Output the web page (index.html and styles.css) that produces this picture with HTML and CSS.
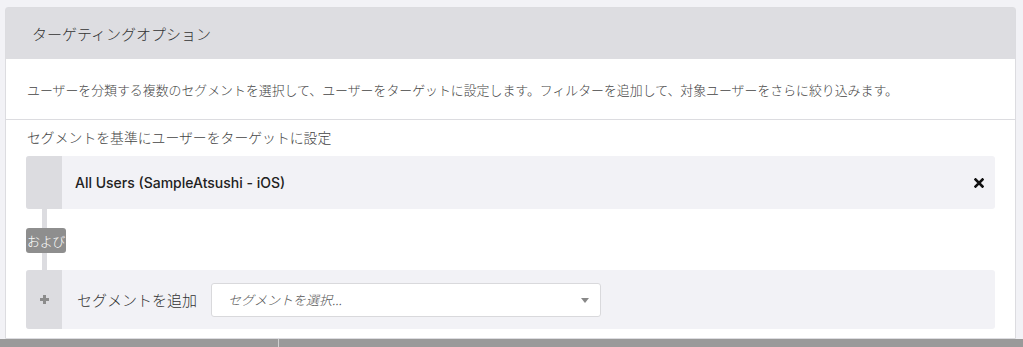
FILE: index.html
```html
<!DOCTYPE html>
<html lang="ja">
<head>
<meta charset="utf-8">
<title>ターゲティングオプション</title>
<link rel="stylesheet" href="styles.css">
</head>
<body>
<div class="card">
  <div class="card-header">ターゲティングオプション</div>
  <div class="card-desc">ユーザーを分類する複数のセグメントを選択して、ユーザーをターゲットに設定します。フィルターを追加して、対象ユーザーをさらに絞り込みます。</div>
  <div class="card-section">
    <div class="section-label">セグメントを基準にユーザーをターゲットに設定</div>
    <div class="seg-row">
      <div class="seg-bar"></div>
      <div class="seg-name">All Users (SampleAtsushi - iOS)</div>
      <button class="seg-remove" aria-label="remove">
        <svg width="10" height="10" viewBox="0 0 10 10"><path d="M1.5 1.5 L8.5 8.5 M8.5 1.5 L1.5 8.5" stroke="#111" stroke-width="2.6" stroke-linecap="square" fill="none"/></svg>
      </button>
    </div>
    <div class="connector">
      <div class="conn-line conn-top"></div>
      <div class="conn-badge">および</div>
      <div class="conn-line conn-bottom"></div>
    </div>
    <div class="seg-row add-row">
      <div class="seg-bar plus-bar">
        <svg width="9" height="9" viewBox="0 0 9 9"><path d="M4.5 0 V9 M0 4.5 H9" stroke="#8c8c8c" stroke-width="3" fill="none"/></svg>
      </div>
      <div class="add-label">セグメントを追加</div>
      <div class="select">
        <span class="select-placeholder">セグメントを選択...</span>
        <span class="select-arrow"></span>
      </div>
    </div>
  </div>
</div>
<div class="footer-band">
  <div class="band-left"></div>
  <div class="band-right"></div>
</div>
</body>
</html>
```

FILE: styles.css
```css
html, body {
  margin: 0;
  padding: 0;
  overflow: hidden;
}
body {
  background: #f2f2f6;
  font-family: "Noto Sans CJK JP", "Noto Sans", sans-serif;
  font-weight: 300;
  color: #333;
}
.card {
  margin: 7px 0 0 5px;
  width: 1011px;
  box-sizing: border-box;
  background: #fff;
  border: 1px solid #dcdce0;
  border-radius: 3px 3px 0 0;
}
.card-header {
  height: 51px;
  background: #dddde1;
  display: flex;
  align-items: center;
  padding-left: 26px;
  font-size: 15px;
  color: #333;
}
.card-desc {
  height: 60px;
  display: flex;
  align-items: center;
  padding-left: 21px;
  font-size: 12.9px;
  color: #444;
  border-bottom: 1px solid #dcdce0;
  white-space: nowrap;
}
.card-section {
  padding: 7px 20px 9px 20px;
}
.section-label {
  height: 20px;
  line-height: 20px;
  font-size: 13.85px;
  color: #444;
  margin-bottom: 9px;
  padding-left: 1px;
}
.seg-row {
  height: 53px;
  background: #f2f2f6;
  border-radius: 3px;
  display: flex;
  align-items: center;
  overflow: hidden;
}
.seg-bar {
  width: 36px;
  align-self: stretch;
  background: #dcdce0;
  display: flex;
  align-items: center;
  justify-content: center;
}
.seg-name {
  flex: 1;
  padding-left: 13px;
  font-family: "Inter", "Lato", sans-serif;
  font-weight: 500;
  font-size: 14px;
  color: #222;
}
.seg-remove {
  background: none;
  border: 0;
  padding: 0;
  margin-right: 11px;
  width: 10px;
  height: 10px;
  display: flex;
}
.connector {
  display: flex;
  flex-direction: column;
  width: 40px;
  align-items: flex-start;
}
.conn-line {
  width: 5px;
  margin-left: 16px;
  background: #dcdce0;
}
.conn-top { height: 19px; }
.conn-bottom { height: 17px; }
.conn-badge {
  width: 40px;
  height: 25px;
  line-height: 25px;
  background: #8e8e8e;
  color: #fff;
  font-size: 13px;
  text-align: center;
  border-radius: 3px;
  letter-spacing: -0.3px;
}
.add-row {
  height: 59px;
}
.add-label {
  padding-left: 15px;
  font-size: 15px;
  color: #333;
  width: 118px;
  white-space: nowrap;
}
.select {
  margin-left: 16px;
  width: 390px;
  height: 34px;
  box-sizing: border-box;
  background: #fff;
  border: 1px solid #d9d9dc;
  border-radius: 3px;
  display: flex;
  align-items: center;
  justify-content: space-between;
  padding: 0 11px 0 16px;
}
.select-placeholder {
  font-size: 13px;
  font-style: italic;
  color: #555;
}
.select-arrow {
  width: 0;
  height: 0;
  border-left: 4px solid transparent;
  border-right: 4px solid transparent;
  border-top: 5px solid #888;
  margin-top: 2px;
}
.footer-band {
  display: flex;
  height: 8px;
  background: #9a9a9a;
}
.band-left {
  width: 278px;
  border-right: 1px solid #d0d0d0;
}
.band-right {
  flex: 1;
}
```
